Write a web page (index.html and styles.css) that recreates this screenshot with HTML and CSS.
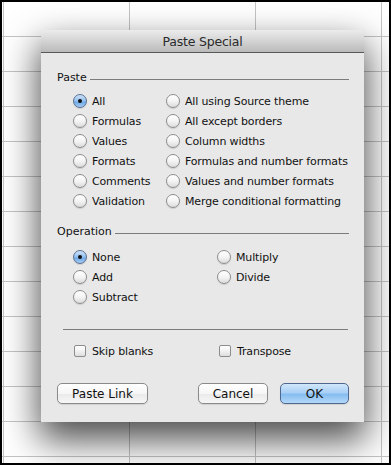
FILE: index.html
```html
<!DOCTYPE html>
<html lang="en">

<head>
    <meta charset="UTF-8">
    <meta name="viewport" content="width=device-width, initial-scale=1.0">
    <title>Paste Special</title>
    <link rel="stylesheet" href="styles.css">
</head>

<body>
    <div class="sheet-area">
        <div class="sheet">
            <div class="titlebar">Paste Special</div>

            <div class="sheet-body">
                <div class="legend">Paste</div>
                <div class="options paste-options">
                    <div class="col col-narrow">
                        <label class="opt"><span class="radio checked"></span>All</label>
                        <label class="opt"><span class="radio"></span>Formulas</label>
                        <label class="opt"><span class="radio"></span>Values</label>
                        <label class="opt"><span class="radio"></span>Formats</label>
                        <label class="opt"><span class="radio"></span>Comments</label>
                        <label class="opt"><span class="radio"></span>Validation</label>
                    </div>
                    <div class="col">
                        <label class="opt"><span class="radio"></span>All using Source theme</label>
                        <label class="opt"><span class="radio"></span>All except borders</label>
                        <label class="opt"><span class="radio"></span>Column widths</label>
                        <label class="opt"><span class="radio"></span>Formulas and number formats</label>
                        <label class="opt"><span class="radio"></span>Values and number formats</label>
                        <label class="opt"><span class="radio"></span>Merge conditional formatting</label>
                    </div>
                </div>

                <div class="legend legend-op">Operation</div>
                <div class="options op-options">
                    <div class="col col-wide">
                        <label class="opt"><span class="radio checked"></span>None</label>
                        <label class="opt"><span class="radio"></span>Add</label>
                        <label class="opt"><span class="radio"></span>Subtract</label>
                    </div>
                    <div class="col">
                        <label class="opt"><span class="radio"></span>Multiply</label>
                        <label class="opt"><span class="radio"></span>Divide</label>
                    </div>
                </div>

                <div class="separator"></div>

                <div class="checks">
                    <label class="opt check-wide"><span class="checkbox"></span>Skip blanks</label>
                    <label class="opt"><span class="checkbox"></span>Transpose</label>
                </div>

                <div class="buttons">
                    <button class="btn btn-link">Paste Link</button>
                    <div class="button-group">
                        <button class="btn btn-cancel">Cancel</button>
                        <button class="btn btn-ok">OK</button>
                    </div>
                </div>
            </div>
        </div>
    </div>
</body>

</html>
```

FILE: styles.css
```css
html,
body {
    margin: 0;
    padding: 0;
}

body {
    font-family: 'DejaVu Sans', 'Noto Sans', sans-serif;
    font-size: 11px;
    color: #111;
    background: #fff;
}

/* spreadsheet behind the sheet */
.sheet-area {
    box-sizing: border-box;
    width: 391px;
    height: 465px;
    border: 2px solid #000;
    overflow: hidden;
    padding: 28px 0 0 39px;
    background-color: #fff;
    background-image:
        linear-gradient(to right, #c4c4c4 1px, transparent 1px),
        linear-gradient(to bottom, #c4c4c4 1px, transparent 1px);
    background-size: 126px 100%, 100% 35px;
    background-position: 1px 0, 0 34px;
}

.sheet {
    width: 323px;
    height: 392px;
    background: #e8e8e8;
    border-radius: 4px 4px 0 0;
    box-shadow: 0 16px 36px 2px rgba(0, 0, 0, 0.7);
}

.titlebar {
    height: 22px;
    line-height: 23px;
    text-align: center;
    font-size: 12.5px;
    letter-spacing: -0.2px;
    color: #2a2a2a;
    border-radius: 4px 4px 0 0;
    border-bottom: 1px solid #585858;
    background: linear-gradient(to bottom, #ececec 0%, #d6d6d6 45%, #bababa 100%);
}

.sheet-body {
    padding: 0 15px 0 16px;
}

.legend {
    display: flex;
    align-items: center;
    height: 14px;
    margin-top: 17px;
}

.legend::after {
    content: '';
    flex: 1;
    height: 1px;
    margin: 4px 0 0 3px;
    background: #7c7c7c;
}

.legend-op {
    margin-top: 13px;
}

.options {
    display: flex;
    padding-left: 16px;
}

.paste-options {
    margin-top: 7px;
}

.op-options {
    margin-top: 9px;
}

.col-narrow {
    width: 93px;
}

.col-wide {
    width: 144px;
}

.opt {
    display: flex;
    align-items: center;
    height: 20px;
    white-space: nowrap;
    letter-spacing: -0.15px;
}

.radio {
    box-sizing: border-box;
    width: 14px;
    height: 14px;
    margin-right: 5px;
    border-radius: 50%;
    border: 1px solid #8d8d8d;
    background: linear-gradient(to bottom, #ffffff 0%, #f4f4f4 50%, #dcdcdc 100%);
    box-shadow: 0 1px 1px rgba(0, 0, 0, 0.12);
    flex: none;
    display: flex;
    align-items: center;
    justify-content: center;
}

.radio.checked {
    border-color: #5a6f92;
    background: linear-gradient(to bottom, #cfe3f8 0%, #92bff0 50%, #6fa9e6 60%, #a6cdf5 100%);
}

.radio.checked::after {
    content: '';
    width: 4px;
    height: 4px;
    border-radius: 50%;
    background: #111;
}

.separator {
    height: 1px;
    margin: 22px 1px 0 6px;
    background: #7c7c7c;
}

.checks {
    display: flex;
    margin-top: 11px;
    padding-left: 17px;
}

.check-wide {
    width: 145px;
}

.checkbox {
    box-sizing: border-box;
    width: 12px;
    height: 12px;
    margin-right: 6px;
    border-radius: 2px;
    border: 1px solid #8d8d8d;
    background: linear-gradient(to bottom, #ffffff 0%, #f2f2f2 50%, #dedede 100%);
    flex: none;
}

.buttons {
    display: flex;
    justify-content: space-between;
    margin-top: 22px;
}

.button-group {
    display: flex;
    gap: 12px;
}

.btn {
    box-sizing: border-box;
    height: 21px;
    padding: 0;
    font-family: 'DejaVu Sans', 'Noto Sans', sans-serif;
    font-size: 12px;
    color: #111;
    border: 1px solid #8a8a8a;
    border-radius: 5px;
    background: linear-gradient(to bottom, #ffffff 0%, #f6f6f6 50%, #e9e9e9 51%, #f7f7f7 100%);
    box-shadow: 0 1px 1px rgba(0, 0, 0, 0.1);
}

.btn-link {
    width: 91px;
}

.btn-cancel {
    width: 70px;
}

.btn-ok {
    width: 69px;
    border-color: #4e6890;
    background: linear-gradient(to bottom, #d2e7fb 0%, #a9d0f6 45%, #86bdf0 55%, #b4d8f8 100%);
}
```
